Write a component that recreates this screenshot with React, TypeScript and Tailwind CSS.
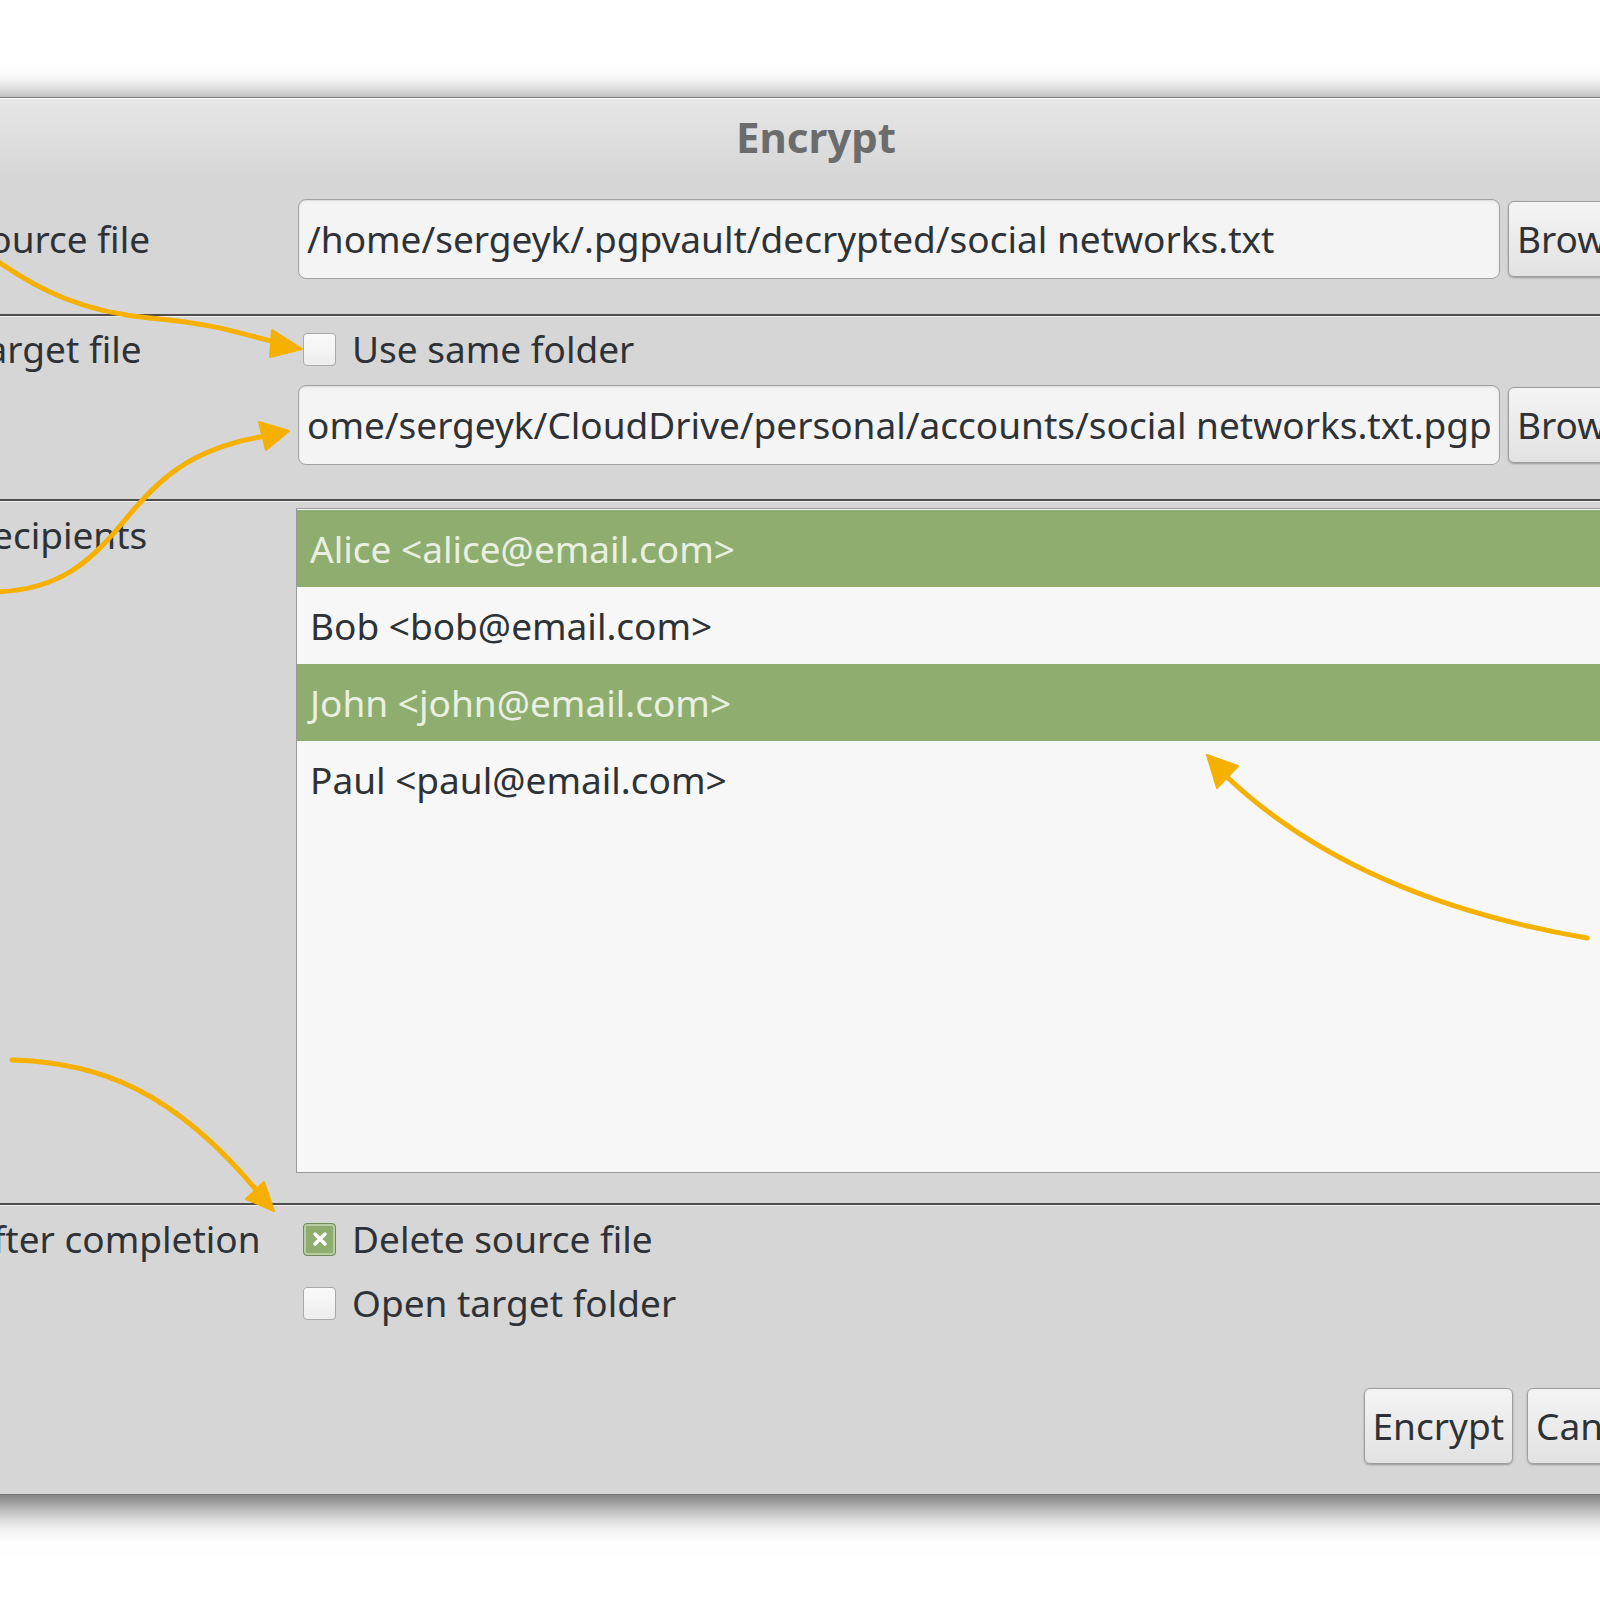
import type { ReactNode } from 'react';

const font = "font-['Noto_Sans',sans-serif]";

function Checkbox({ checked }: { checked?: boolean }) {
  if (checked) {
    return (
      <div className="shrink-0 w-[33px] h-[33px] rounded-[4px] border border-[#6f8d55] bg-[#8fad6e] flex items-center justify-center shadow-[inset_0_0_0_2px_#b9cda4]">
        <svg width="18" height="18" viewBox="0 0 18 18">
          <path d="M4 4 L14 14 M14 4 L4 14" stroke="#ffffff" strokeWidth="3.4" strokeLinecap="round" />
        </svg>
      </div>
    );
  }
  return <div className="shrink-0 w-[33px] h-[33px] rounded-[4px] border border-[#a9a9a9] bg-gradient-to-b from-[#fafafa] to-[#ededed]" />;
}

function Button({ children, className = '' }: { children: ReactNode; className?: string }) {
  return (
    <div className={`shrink-0 h-[76px] rounded-[6px] border border-[#9d9d9d] bg-gradient-to-b from-[#f4f4f4] to-[#e2e2e2] shadow-[0_1px_2px_rgba(0,0,0,0.3)] flex items-center px-[8px] whitespace-nowrap text-[#2e3236] ${className}`}>
      {children}
    </div>
  );
}

function PathInput({ value }: { value: string }) {
  return (
    <div className="flex-1 min-w-0 h-[80px] rounded-[8px] border border-[#a2a2a2] bg-[#f4f4f4] shadow-[inset_0_1px_2px_rgba(0,0,0,0.12)] flex items-center px-[8px] overflow-hidden whitespace-nowrap text-[#2e3236]">
      {value}
    </div>
  );
}

function Separator() {
  return <div className="h-[2px] bg-[#4e4e4e] shadow-[0_1px_0_#efefef]" />;
}

function Label({ children, className = '' }: { children: ReactNode; className?: string }) {
  return <div className={`whitespace-nowrap text-[#2e3236] ${className}`}>{children}</div>;
}

const recipients = [
  { name: 'Alice <alice@email.com>', selected: true },
  { name: 'Bob <bob@email.com>', selected: false },
  { name: 'John <john@email.com>', selected: true },
  { name: 'Paul <paul@email.com>', selected: false },
];

function Arrows() {
  const c = '#f5b000';
  return (
    <svg className="absolute left-0 top-0 pointer-events-none" width="1600" height="1600" viewBox="0 0 1600 1600">
      <g fill="none" stroke={c} strokeWidth="5" strokeLinecap="round">
        <path d="M -10 256 C 40 292, 85 312, 150 318 S 235 332, 278 343" />
        <path d="M -10 592 C 60 592, 92 560, 125 520 S 190 448, 266 436" />
        <path d="M 1587 938 C 1470 918, 1330 875, 1226 776" />
        <path d="M 12 1060 C 100 1062, 175 1092, 258 1192" />
      </g>
      <g fill={c} stroke={c} strokeWidth="2" strokeLinejoin="round">
        <polygon points="272,330 302,349 270,357" />
        <polygon points="259,422 289,431 266,450" />
        <polygon points="1207,755 1238,766 1217,788" />
        <polygon points="246,1199 274,1211 264,1182" />
      </g>
    </svg>
  );
}

export default function App() {
  return (
    <div className={`relative w-[1600px] h-[1600px] bg-white overflow-hidden text-[37px] leading-[1.4] ${font}`}>
      <div className="pt-[97px]">
        <div className="ml-[-45px] w-[1722px] bg-[#d6d6d6] border-t border-b border-[#7a7a7a] shadow-[0_14px_32px_rgba(0,0,0,0.55),0_-6px_22px_rgba(0,0,0,0.22)]">
          {/* title bar */}
          <div className="h-[82px] border-t border-[#fbfbfb] bg-gradient-to-b from-[#e6e6e6] to-[#d6d6d6] flex items-center justify-center">
            <span className="font-bold text-[42px] text-[#6c6c6c] pb-[4px]">Encrypt</span>
          </div>

          <div className="pt-[19px]">
            {/* source */}
            <div className="grid grid-cols-[329px_minmax(0,1fr)] pl-[14px] pr-[19px] items-center">
              <Label>Source file</Label>
              <div className="flex gap-[8px]">
                <PathInput value="/home/sergeyk/.pgpvault/decrypted/social networks.txt" />
                <Button className="w-[150px] mt-[2px]">Browse...</Button>
              </div>
            </div>

            <div className="h-[35px]" />
            <Separator />

            {/* target */}
            <div className="grid grid-cols-[329px_minmax(0,1fr)] pl-[14px] pr-[19px] pt-[16px] pb-[34px]">
              <Label className="h-[34px] flex items-center">Target file</Label>
              <div className="flex flex-col gap-[19px]">
                <div className="h-[34px] flex items-center gap-[16px] pl-[5px] text-[#2e3236]">
                  <Checkbox />
                  <span>Use same folder</span>
                </div>
                <div className="flex gap-[8px]">
                  <PathInput value="ome/sergeyk/CloudDrive/personal/accounts/social networks.txt.pgp" />
                  <Button className="w-[150px] mt-[2px]">Browse...</Button>
                </div>
              </div>
            </div>

            <Separator />

            {/* recipients */}
            <div className="grid grid-cols-[327px_minmax(0,1fr)] pl-[14px] pr-[19px] pt-[7px] pb-[30px]">
              <Label className="pt-[1px]">Recipients</Label>
              <div className="h-[665px] border border-[#9a9a9a] bg-[#f7f7f7] pt-[1px]">
                {recipients.map(r => (
                  <div
                    key={r.name}
                    className={`h-[77px] flex items-center px-[13px] whitespace-nowrap ${r.selected ? 'bg-[#8fad6e] text-[#e9f0e1]' : 'text-[#2e3236]'}`}
                  >
                    {r.name}
                  </div>
                ))}
              </div>
            </div>

            <Separator />

            {/* after completion */}
            <div className="grid grid-cols-[329px_minmax(0,1fr)] pl-[14px] pr-[19px] pt-[14px]">
              <Label className="h-[40px] flex items-center">After completion</Label>
              <div className="flex flex-col gap-[24px]">
                <div className="h-[40px] flex items-center gap-[16px] pl-[5px] text-[#2e3236]">
                  <Checkbox checked />
                  <span>Delete source file</span>
                </div>
                <div className="h-[40px] flex items-center gap-[16px] pl-[5px] text-[#2e3236]">
                  <Checkbox />
                  <span>Open target folder</span>
                </div>
              </div>
            </div>

            {/* buttons */}
            <div className="flex justify-end gap-[14px] pr-[19px] pt-[65px] pb-[30px]">
              <Button>Encrypt</Button>
              <Button className="w-[131px]">Cancel</Button>
            </div>
          </div>
        </div>
      </div>
      <Arrows />
    </div>
  );
}
